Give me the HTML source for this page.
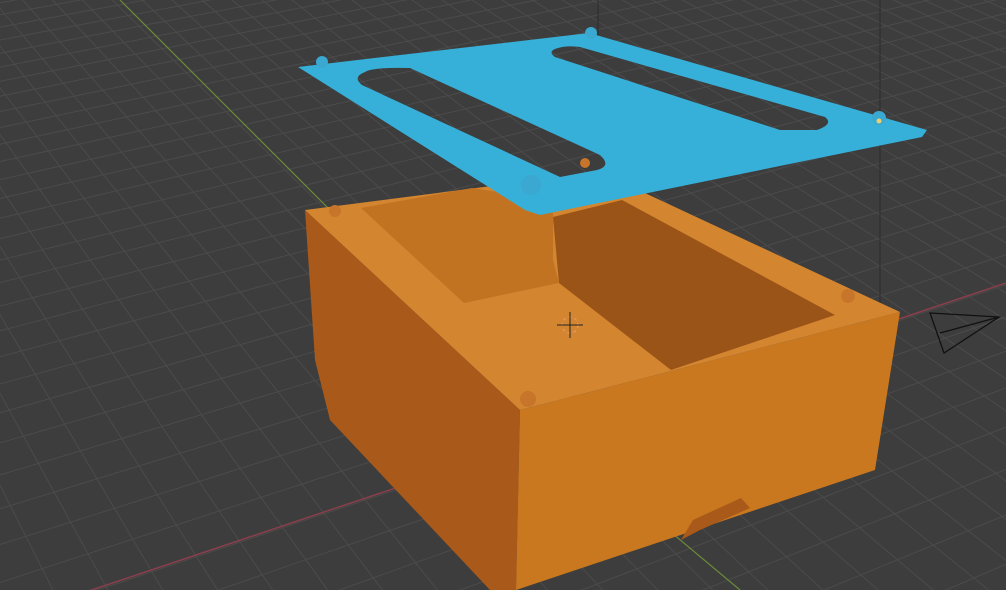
<!DOCTYPE html>
<html><head><meta charset="utf-8"><style>
html,body{margin:0;padding:0;background:#3d3d3d;overflow:hidden;width:1006px;height:590px}
svg{display:block}
</style></head><body>
<svg id="s" width="1006" height="590" viewBox="0 0 1006 590" xmlns="http://www.w3.org/2000/svg">
<rect width="1006" height="590" fill="#3d3d3d"/>
<g id="grid" stroke="#4b4b4b" stroke-width="1" fill="none"></g>
<line x1="-200" y1="688" x2="1006" y2="283" stroke="#8a3f4c" stroke-width="1.5"/>
<line x1="120" y1="0" x2="556" y2="436" stroke="#6b8a3a" stroke-width="1.2"/>
<line x1="556" y1="436" x2="740" y2="590" stroke="#6b8a3a" stroke-width="1.2"/>
<g stroke="#2a2a2a" stroke-width="1">
<line x1="598" y1="0" x2="598" y2="35"/><line x1="880" y1="0" x2="880" y2="310"/>
</g>
<g stroke="#111" stroke-width="1.3" fill="none">
<path d="M930 313 L999 317 L944 353 Z M940 333 L999 317"/>
</g>
<polygon points="305,210 520,410 516,590 490,590 330,420 315,360" fill="#a9591a"/>
<polygon points="520,410 900,312 875,470 516,590" fill="#c9781f"/>
<polygon points="305,210 600,172 900,312 520,410" fill="#d4852f"/>
<polygon points="361,208 472,188 553,200 553,260 559,283 464,303" fill="#c27322"/>
<polygon points="553,217 622,200 835,315 671,370 559,283" fill="#9a5418"/>
<polygon points="681,540 693,520 741,498 750,508 700,530" fill="#a9591a"/>
<g fill="#c7752a"><circle cx="335" cy="211" r="6"/><circle cx="528" cy="399" r="8"/><circle cx="848" cy="296" r="7"/><circle cx="585" cy="163" r="5"/></g>
<g fill="none"><circle cx="570" cy="325" r="8" stroke-dasharray="3 3" stroke="#e8a070"/><path d="M570 312v26M557 325h26" stroke="#222"/></g>
<path d="M298 67 L589 33 L927 130 L922 137 L540 215 L525 210 Z M365 72 Q372 67 410 68 L600 155 Q612 166 597 170 L560 177 L362 85 Q352 77 365 72 Z M555 49 Q565 45 580 47 L825 117 Q834 124 817 130 L780 130 L555 57 Q548 52 555 49 Z" fill="#36b0d8" fill-rule="evenodd"/>
<g fill="#3aa8d0"><circle cx="322" cy="62" r="6"/><circle cx="591" cy="33" r="6"/><circle cx="879" cy="118" r="7"/><circle cx="531" cy="185" r="10"/></g>
<circle cx="879" cy="121" r="2.5" fill="#e8d070"/>
</svg>
<script>
(function(){
var g=document.getElementById('grid');
var O=[556,436],R=[4000,-721],G=[-600,-700],a=0.0105,b=0.0235;
function P(u,v){var d=a*u+b*v+1;return [(a*u*R[0]+b*v*G[0]+O[0])/d,(a*u*R[1]+b*v*G[1]+O[1])/d];}
var s='';
function seg(f,lo,hi){var pts=[];for(var t=lo;t<=hi;t+=0.5){var p=f(t);if(p)pts.push(p[0].toFixed(1)+','+p[1].toFixed(1));}if(pts.length>1)s+='<polyline points="'+pts.join(' ')+'"/>';}
for(var k=-60;k<=90;k++){
 seg(function(t){var d=a*k+b*t+1;return d>0.03?P(k,t):null;},-45,90);
 seg(function(t){var d=a*t+b*k+1;return d>0.03?P(t,k):null;},-90,150);
}
g.innerHTML=s;
})();
</script>
</body></html>
